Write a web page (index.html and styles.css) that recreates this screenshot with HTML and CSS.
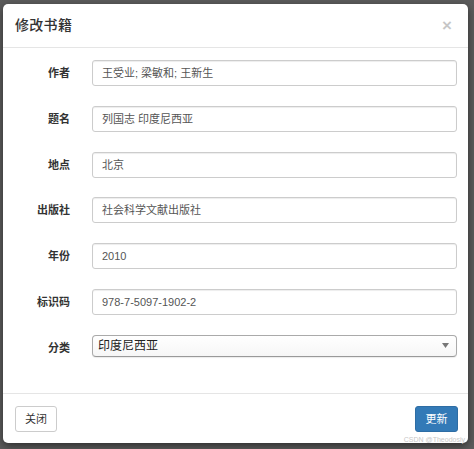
FILE: index.html
```html
<!DOCTYPE html>
<html lang="zh">
<head>
<meta charset="utf-8">
<title>修改书籍</title>
<link rel="stylesheet" href="styles.css">
</head>
<body>
<div class="modal">
  <div class="modal-header">
    <h4 class="modal-title">修改书籍</h4>
    <span class="close">×</span>
  </div>
  <div class="modal-body">
    <div class="form-row"><label>作者</label><div class="input">王受业; 梁敏和; 王新生</div></div>
    <div class="form-row"><label>题名</label><div class="input">列国志 印度尼西亚</div></div>
    <div class="form-row"><label>地点</label><div class="input">北京</div></div>
    <div class="form-row"><label>出版社</label><div class="input">社会科学文献出版社</div></div>
    <div class="form-row"><label>年份</label><div class="input">2010</div></div>
    <div class="form-row"><label>标识码</label><div class="input">978-7-5097-1902-2</div></div>
    <div class="form-row"><label>分类</label><div class="select"><span>印度尼西亚</span><svg class="arrow" width="7" height="5" viewBox="0 0 7 5"><path d="M0 0H7L3.5 5Z" fill="#777"/></svg></div></div>
  </div>
  <div class="modal-footer">
    <div class="btn btn-default">关闭</div>
    <div class="btn btn-primary">更新</div>
  </div>
  <div class="watermark">CSDN @Theodosiy</div>
</div>
</body>
</html>
```
FILE: styles.css
```css
html, body {
  margin: 0;
  padding: 0;
  background: #5c5c5c;
  width: 474px;
  height: 449px;
  overflow: hidden;
  font-family: "Helvetica Neue", "Liberation Sans", "Noto Sans CJK SC", sans-serif;
}
.modal {
  position: relative;
  margin: 4px 0 0 3px;
  width: 465px;
  height: 439px;
  background: #fff;
  border-radius: 5px;
  box-shadow: 0 3px 9px rgba(0,0,0,.5);
  display: flex;
  flex-direction: column;
  box-sizing: border-box;
}
.modal-header {
  height: 44px;
  flex: none;
  box-sizing: border-box;
  border-bottom: 1px solid #e5e5e5;
  display: flex;
  align-items: center;
  justify-content: space-between;
  padding: 0 12px 1px 12px;
}
.modal-title {
  margin: 0;
  font-size: 14px;
  font-weight: 500;
  color: #333;
  line-height: 20px;
  letter-spacing: 0.3px;
}
.close {
  font-size: 17px;
  font-weight: bold;
  color: #000;
  opacity: .22;
  line-height: 1;
  margin-right: 4px;
}
.modal-body {
  padding: 12px 11px 0 12px;
  height: 346px;
  flex: none;
  box-sizing: border-box;
  border-bottom: 1px solid #e5e5e5;
}
.form-row {
  display: grid;
  grid-template-columns: 77px 1fr;
  height: 26px;
  margin-bottom: 19.8px;
  align-items: start;
}
.form-row label {
  font-size: 11px;
  font-weight: bold;
  color: #333;
  text-align: right;
  padding-right: 22px;
  line-height: 26px;
}
.input {
  height: 26px;
  box-sizing: border-box;
  border: 1px solid #ccc;
  border-radius: 3px;
  box-shadow: inset 0 1px 1px rgba(0,0,0,.075);
  padding: 0 9px;
  font-size: 11px;
  line-height: 24px;
  color: #555;
}
.select {
  height: 22px;
  box-sizing: border-box;
  border: 1px solid #aaa;
  border-bottom-color: #999;
  border-radius: 4px;
  background: linear-gradient(#fff, #f6f6f6);
  box-shadow: 0 1px 1px rgba(0,0,0,.08);
  padding: 0 5px;
  font-size: 12px;
  line-height: 20px;
  color: #222;
  display: flex;
  align-items: center;
  justify-content: space-between;
}
.arrow { margin-right: 2px; }
.modal-footer {
  flex: 1;
  display: flex;
  justify-content: space-between;
  align-items: flex-start;
  padding: 12px 10px 0 12px;
}
.btn {
  height: 26px;
  box-sizing: border-box;
  border-radius: 3px;
  font-size: 11px;
  line-height: 24px;
  padding: 0 9px;
  border: 1px solid #ccc;
}
.btn-default {
  background: #fff;
  color: #333;
  width: 42px;
  text-align: center;
  padding: 0;
}
.btn-primary {
  background: #337ab7;
  border-color: #2e6da4;
  color: #fff;
  width: 43px;
  text-align: center;
  padding: 0;
}
.watermark {
  position: absolute;
  right: 3px;
  bottom: -1px;
  font-size: 7px;
  color: #c8c8c8;
  line-height: 9px;
}
```
